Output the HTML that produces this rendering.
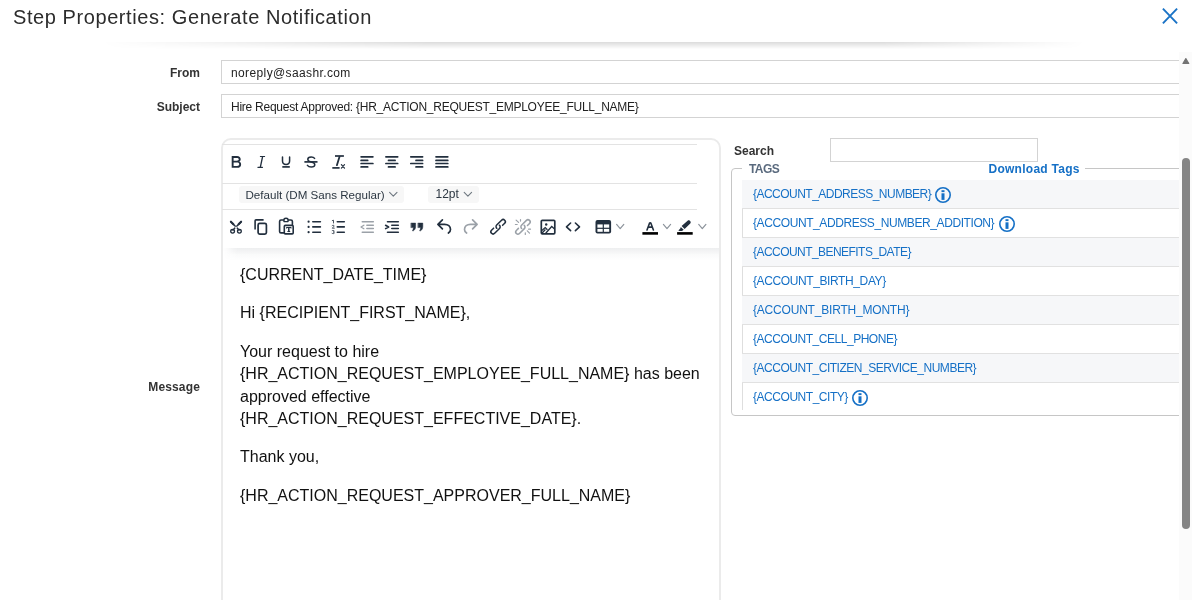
<!DOCTYPE html>
<html><head><meta charset="utf-8">
<style>
*{box-sizing:border-box;margin:0;padding:0}
html,body{width:1192px;height:600px;overflow:hidden;background:#fff;-webkit-font-smoothing:antialiased;font-family:"Liberation Sans",sans-serif;color:#333}
.abs{position:absolute}
#title{left:13px;top:5px;font-size:20px;line-height:24px;letter-spacing:0.58px;color:#2c2c2c;white-space:nowrap}
#close{left:1161px;top:7px;width:18px;height:18px}
#shadow{left:0;top:42px;width:1192px;height:7px;background:linear-gradient(to bottom,rgba(0,0,0,.14),rgba(0,0,0,0));
 -webkit-mask-image:linear-gradient(to right,transparent 8.5%,#000 36%,#000 74%,transparent 91%)}
.lbl{font-weight:bold;font-size:12px;line-height:14px;color:#333;text-align:right;width:100px;white-space:nowrap}
.inp{border:1px solid #d3d3d3;background:#fff;height:24px;font-size:12px;line-height:22px;padding-left:9px;padding-top:1px;color:#222;white-space:nowrap;overflow:hidden}
#editor{left:221px;top:138px;width:500px;height:480px;border:2px solid #ebebeb;border-radius:10px;background:#fff}
.sep{height:1px;background:#e3e3e3}
.ic{position:absolute}
#content{left:240px;font-size:16px;line-height:22.4px;color:#111;white-space:nowrap}
#scroll{left:1179px;top:52px;width:13px;height:548px;background:#fbfbfb}
#thumb{left:1182px;top:158px;width:8px;height:371px;background:#858585;border-radius:4px}
.tag{position:absolute;left:742px;width:437px;height:29px;border-bottom:1px solid #e1e1e1;font-size:12px;line-height:28px;color:#1570c6;padding-left:11px;white-space:nowrap}
.tag.odd{background:#f6f7f9}
#fs{left:731px;top:168px;width:500px;height:248px;border:1px solid #c6c6c6;border-radius:4px}
#legend{left:742px;top:163px;width:343px;height:12px;background:#fff;padding-left:7px;font-weight:bold;font-size:12px;line-height:13px;color:#5a6a7e;letter-spacing:-0.6px}
#dl{left:988.5px;top:161px;font-weight:bold;font-size:12px;line-height:16px;color:#1570c6;white-space:nowrap;letter-spacing:0.26px}
#tbl{left:742px;top:180px;width:1px;height:230px;background:#dedede}
.info{position:absolute;top:7px;width:16px;height:16px}
.tt{display:inline-block}
#fontdd{left:239px;top:186px;width:165px;height:17px;background:#f7f7f7;border-radius:3px;font-size:11.6px;line-height:17px;padding-left:6.5px;color:#2b3641;white-space:nowrap}
#sizedd{left:427.5px;top:186px;width:51px;height:17px;background:#f7f7f7;border-radius:3px;font-size:12px;line-height:17px;padding-left:8px;color:#2b3641;white-space:nowrap}
#tbshadow{left:223px;top:248px;width:496px;height:12px;background:linear-gradient(to bottom,rgba(34,47,62,.08),rgba(34,47,62,.02) 60%,rgba(34,47,62,0));-webkit-mask-image:linear-gradient(to right,transparent 0,#000 14px)}
</style></head><body><div id="root" style="position:absolute;left:0;top:0;width:1192px;height:600px;will-change:transform">
<div id="title" class="abs">Step Properties: Generate Notification</div>
<svg id="close" class="abs" viewBox="0 0 18 18"><path d="M1.9 1.6L16.1 16.4M16.1 1.6L1.9 16.4" stroke="#1a73c6" stroke-width="1.9" fill="none"/></svg>
<div id="shadow" class="abs"></div>

<div class="abs lbl" style="left:100px;top:66px">From</div>
<div class="abs inp" style="left:221px;top:60px;width:1000px;letter-spacing:0.38px">noreply@saashr.com</div>
<div class="abs lbl" style="left:100px;top:100px">Subject</div>
<div class="abs inp" style="left:221px;top:94px;width:1000px;letter-spacing:-0.25px">Hire Request Approved: {HR_ACTION_REQUEST_EMPLOYEE_FULL_NAME}</div>
<div class="abs lbl" style="left:100px;top:380px;letter-spacing:0.15px">Message</div>

<div id="editor" class="abs"></div>
<div class="abs sep" style="left:222px;top:144px;width:475px"></div>
<div class="abs sep" style="left:222px;top:183px;width:475px"></div>
<div class="abs sep" style="left:222px;top:209px;width:475px"></div>

<div class="abs" id="fontdd">Default (DM Sans Regular)</div>
<div class="abs" id="sizedd">12pt</div>
<div class="abs" id="tbshadow"></div>
<svg class="abs" style="left:0;top:0" width="1192" height="600" viewBox="0 0 1192 600">
<g fill="none" stroke="#222f3e" stroke-linecap="round" stroke-linejoin="round">
<!-- Bold -->
<path d="M231.7 156 H237 C239.4 156 240.7 157.3 240.7 159.2 C240.7 160.4 240.1 161.2 239.2 161.6 C240.4 162 241.1 163 241.1 164.4 C241.1 166.5 239.6 167.8 237.3 167.8 H231.7 Z M233.6 157.9 V160.8 H236.8 C238.1 160.8 238.8 160.2 238.8 159.35 C238.8 158.5 238.1 157.9 236.8 157.9 Z M233.6 162.6 V165.9 H237.1 C238.5 165.9 239.2 165.3 239.2 164.25 C239.2 163.2 238.5 162.6 237.1 162.6 Z" fill="#222f3e" fill-rule="evenodd" stroke="none"/>
<!-- Italic -->
<path d="M262.6 156.6 L260.3 167.3" stroke-width="1.35"/>
<path d="M260.4 156.5 H264.6 M257.9 167.3 H262.5" stroke-width="1.15"/>
<!-- Underline -->
<path d="M282.5 156.9 V161 C282.5 163.3 283.9 164.4 286.05 164.4 C288.2 164.4 289.6 163.3 289.6 161 V156.9" stroke-width="1.5"/>
<path d="M282.3 166.9 H289.8" stroke-width="1.7" stroke-linecap="butt"/>
<!-- Strike -->
<path d="M314.6 158.4 C313.9 157.3 312.8 156.9 311.2 156.9 C309.1 156.9 307.8 157.9 307.8 159.3 C307.8 160.9 309.1 161.5 311.2 162 C313.6 162.5 314.8 163.3 314.8 164.8 C314.8 166.3 313.4 167.1 311.2 167.1 C309.5 167.1 308.2 166.5 307.4 165.4" stroke-width="1.5"/>
<path d="M304.4 161.9 H317.5" stroke-width="1.7" stroke-linecap="butt"/>
<!-- Clear format -->
<path d="M335 156 H343.9" stroke-width="1.7" stroke-linecap="butt"/>
<path d="M339.5 156.8 L336.9 165.2" stroke-width="1.8"/>
<path d="M332.3 167.9 H339.6" stroke-width="1.7" stroke-linecap="butt"/>
<path d="M341.4 164.6 L344.5 168.1 M344.5 164.6 L341.4 168.1" stroke-width="1.2"/>
<!-- align left -->
<path d="M361.1 156.8 H372.9 M361.1 160.4 H367.7 M361.1 163.5 H372.9 M361.1 166.9 H367.7" stroke-width="1.7"/>
<!-- align center -->
<path d="M385.9 156.8 H397.7 M388.5 160.4 H395.1 M385.9 163.5 H397.7 M388.5 166.9 H395.1" stroke-width="1.7"/>
<!-- align right -->
<path d="M410.8 156.8 H422.6 M416 160.4 H422.6 M410.8 163.5 H422.6 M416 166.9 H422.6" stroke-width="1.7"/>
<!-- justify -->
<path d="M436 156.8 H447.8 M436 160.4 H447.8 M436 163.5 H447.8 M436 166.9 H447.8" stroke-width="1.7"/>

<!-- font dropdown chevrons -->
<path d="M389.6 192.4 L393.3 196.2 L397 192.4 M464.2 192.4 L467.9 196.2 L471.6 192.4" stroke="#6f7881" stroke-width="1.1"/>

<!-- Scissors -->
<path d="M231 221.9 L239.1 230.1 M241 221.9 L232.9 230.1" stroke-width="1.4"/>
<path d="M230.9 221.7 L233.4 224.3 M241.1 221.7 L238.6 224.3" stroke-width="2.1"/>
<circle cx="236" cy="227.4" r="0.9" fill="#fff" stroke="none"/>
<ellipse cx="232.6" cy="231.3" rx="1.9" ry="1.8" stroke-width="1.3"/>
<ellipse cx="239.4" cy="231.3" rx="1.9" ry="1.8" stroke-width="1.3"/>
<!-- Copy -->
<path d="M255.1 229.6 V220.8 C255.1 220.2 255.4 219.9 256 219.9 H263.6" stroke-width="1.6" stroke-linecap="butt"/>
<rect x="258.1" y="223.3" width="8.3" height="10.9" rx="1.6" stroke-width="1.7"/>
<!-- Paste -->
<path d="M283.6 232.9 H281 C280.1 232.9 279.6 232.4 279.6 231.5 V221.4 C279.6 220.5 280.1 220 281 220 H290.9 C291.8 220 292.4 220.5 292.4 221.4 V224.6" stroke-width="1.6"/>
<path d="M284 220.2 V219.8 C284 218.9 284.8 218.3 286 218.3 C287.2 218.3 288 218.9 288 219.8 V221.6 H284 Z" stroke-width="1.4" fill="#fff"/>
<rect x="284.3" y="225.4" width="8.9" height="8.5" rx="1" stroke-width="1.6" fill="#fff"/>
<path d="M286.6 228.4 V227.5 H291 V228.4" stroke-width="1.1" stroke-linecap="butt"/><path d="M288.8 227.5 V231.4" stroke-width="1.5" stroke-linecap="butt"/><path d="M287.4 231.5 H290.2" stroke-width="1.1" stroke-linecap="butt"/>
<!-- bullet list -->
<path d="M312.8 221.7 H320.4 M312.8 226.9 H320.4 M312.8 232.2 H320.4" stroke-width="1.6"/>
<circle cx="308.6" cy="221.7" r="1.1" fill="#222f3e" stroke="none"/>
<circle cx="308.6" cy="226.9" r="1.1" fill="#222f3e" stroke="none"/>
<circle cx="308.6" cy="232.2" r="1.1" fill="#222f3e" stroke="none"/>
<!-- numbered list -->
<path d="M337.3 221.7 H344.3 M337.3 226.9 H344.3 M337.3 232.2 H344.3" stroke-width="1.6"/>
<path d="M332.3 220.6 L333.5 220.2 V223 M332.1 225.6 C332.6 225.1 334.2 225.1 334.2 226 C334.2 226.8 332.3 227.5 332.3 228.2 H334.3 M332.2 230.6 C332.8 230.3 334.3 230.3 334.3 231.2 C334.3 231.7 333.6 231.9 333.2 232 C333.8 232.1 334.4 232.3 334.4 232.9 C334.4 233.8 332.8 233.8 332.1 233.4" stroke-width="0.8"/>
<!-- outdent -->
<g stroke="#9ba1a8">
<path d="M362.3 221.7 H373.3 M366.9 225.2 H373.3 M366.9 228.5 H373.3 M362.3 232.2 H373.3" stroke-width="1.6"/>
<path d="M363.9 225.2 L361 227 L363.9 228.7" stroke-width="1.3"/>
</g>
<!-- indent -->
<path d="M387.5 221.7 H398.3 M391.8 225.2 H398.3 M391.8 228.5 H398.3 M387.5 232.2 H398.3" stroke-width="1.6"/>
<path d="M385.6 225.3 L388.6 227 L385.6 228.6" stroke-width="1.6"/>
<!-- quote -->
<path d="M411.2 223.1 H415.6 V226.5 C415.6 228.5 414.8 230 413.4 230.8 H412.4 C413 230 413.3 229 413.4 227.6 H411.2 Z M418.2 223.1 H422.8 V226.5 C422.8 228.5 422 230 420.6 230.8 H419.6 C420.2 230 420.5 229 420.6 227.6 H418.2 Z" fill="#222f3e" stroke-width="0.5"/>
<!-- undo -->
<path d="M442.4 219.9 L437.9 224.3 L442.4 228.9 M438.3 224.3 H444.6 C448 224.3 450.5 226.5 450.5 229.4 C450.5 231 449.6 232.2 448.4 233" stroke-width="1.7"/>
<!-- redo -->
<path d="M472.6 219.9 L477.1 224.3 L472.6 228.9 M476.7 224.3 H470.4 C467 224.3 464.5 226.5 464.5 229.4 C464.5 231 465.4 232.2 466.6 233" stroke="#9ba1a8" stroke-width="1.7"/>
<!-- link -->
<defs><path id="lk" d="M4.2 2.2 H7.1 A2.2 2.2 0 0 0 7.1 -2.2 H0.2 A2.2 2.2 0 0 0 -2 0.2"/></defs>
<g transform="translate(498.1 226.75) rotate(-45)" stroke-width="1.5"><use href="#lk"/><use href="#lk" transform="rotate(180)"/></g>
<!-- unlink -->
<g stroke="#9ba1a8">
<g transform="translate(522.95 226.95) rotate(-45)" stroke-width="1.5"><use href="#lk"/><use href="#lk" transform="rotate(180)"/></g>
<path d="M516.1 220.1 L518.6 222.4 M520.5 219.6 V221.1 M515.4 224.5 H517.2 M528.6 229.2 H530.5 M527.3 230.8 L529.5 233.1 M525.3 232.8 V234.4" stroke-width="1.2"/>
</g>
<!-- image -->
<rect x="541.3" y="220.3" width="13.5" height="13.5" rx="1" stroke-width="1.7"/>
<circle cx="546.2" cy="224.5" r="1.2" fill="#222f3e" stroke="none"/>
<path d="M541.9 230.4 L545.2 227.6 L547.4 229.8 M545.7 233.3 L551.7 226.5 L554.6 229.1 M541.9 233.3 L545.4 229.5" stroke-width="1.3" stroke-linejoin="miter" stroke-linecap="butt"/>
<!-- code -->
<path d="M570.6 223 L566.5 226.9 L570.6 230.7 M575.4 223 L579.5 226.9 L575.4 230.7" stroke-width="1.6"/>
<!-- table -->
<rect x="595.5" y="220" width="15.6" height="13.6" rx="2" fill="#222f3e" stroke="none"/>
<rect x="597.4" y="224.4" width="5.3" height="3.3" fill="#fff" stroke="none"/>
<rect x="603.9" y="224.4" width="5.3" height="3.3" fill="#fff" stroke="none"/>
<rect x="597.4" y="228.9" width="5.3" height="2.9" fill="#fff" stroke="none"/>
<rect x="603.9" y="228.9" width="5.3" height="2.9" fill="#fff" stroke="none"/>
<!-- chevrons -->
<path d="M616.6 224.4 L620.2 228.6 L623.8 224.4 M663.4 224.4 L667 228.6 L670.6 224.4 M698.7 224.4 L702.3 228.6 L705.9 224.4" stroke="#8d949c" stroke-width="1.2"/>
<!-- text color -->
<path d="M647 230 L649.5 223.2 C649.8 222.6 650.6 222.6 650.9 223.2 L653.4 230 M648.2 227.1 H652.2" stroke-width="1.6"/>
<rect x="642.4" y="232.1" width="15.6" height="2.6" fill="#000" stroke="none"/>
<!-- highlight -->
<path d="M687.6 220.8 C688.3 220.2 689.2 220.2 689.8 220.8 L690.3 221.3 C690.9 221.9 690.9 222.8 690.3 223.4 L684.6 229 L681.6 226 Z" fill="#222f3e" stroke="none"/>
<path d="M680.8 226.9 L683.7 229.8 L682 231 L679.7 231 L678.3 230.6 L680.3 228.6 Z" fill="#222f3e" stroke="none"/>
<rect x="677.1" y="232.1" width="15.6" height="2.6" fill="#000" stroke="none"/>
</g>
</svg>

<div id="content" class="abs" style="top:264px">
<div style="margin-bottom:16px">{CURRENT_DATE_TIME}</div>
<div style="margin-bottom:16px">Hi {RECIPIENT_FIRST_NAME},</div>
<div style="margin-bottom:16px">Your request to hire<br>{HR_ACTION_REQUEST_EMPLOYEE_FULL_NAME} has been<br>approved effective<br>{HR_ACTION_REQUEST_EFFECTIVE_DATE}.</div>
<div style="margin-bottom:16px">Thank you,</div>
<div>{HR_ACTION_REQUEST_APPROVER_FULL_NAME}</div>
</div>

<div class="abs lbl" style="left:734px;top:144px;text-align:left">Search</div>
<div class="abs inp" style="left:830px;top:138px;width:208px"></div>

<div class="abs" id="fs"></div>
<div class="abs" id="legend">TAGS</div>
<div class="abs" id="dl">Download Tags</div>
<div class="abs" id="tbl"></div>
<div class="tag odd" style="top:180px;height:29px"><span class="tt" style="letter-spacing:-0.52px">{ACCOUNT_ADDRESS_NUMBER}</span><svg class="info" style="left:193px" viewBox="0 0 16 16"><circle cx="8" cy="8" r="7.2" fill="none" stroke="#1570c6" stroke-width="1.6"/><rect x="6.5" y="3.2" width="3" height="1.9" fill="#1570c6"/><rect x="6.5" y="6.3" width="3" height="6.6" fill="#1570c6"/></svg></div>
<div class="tag" style="top:209px;height:29px"><span class="tt" style="letter-spacing:-0.41px">{ACCOUNT_ADDRESS_NUMBER_ADDITION}</span><svg class="info" style="left:257px" viewBox="0 0 16 16"><circle cx="8" cy="8" r="7.2" fill="none" stroke="#1570c6" stroke-width="1.6"/><rect x="6.5" y="3.2" width="3" height="1.9" fill="#1570c6"/><rect x="6.5" y="6.3" width="3" height="6.6" fill="#1570c6"/></svg></div>
<div class="tag odd" style="top:238px;height:29px"><span class="tt" style="letter-spacing:-0.55px">{ACCOUNT_BENEFITS_DATE}</span></div>
<div class="tag" style="top:267px;height:29px"><span class="tt" style="letter-spacing:-0.39px">{ACCOUNT_BIRTH_DAY}</span></div>
<div class="tag odd" style="top:296px;height:29px"><span class="tt" style="letter-spacing:-0.2px">{ACCOUNT_BIRTH_MONTH}</span></div>
<div class="tag" style="top:325px;height:29px"><span class="tt" style="letter-spacing:-0.47px">{ACCOUNT_CELL_PHONE}</span></div>
<div class="tag odd" style="top:354px;height:29px"><span class="tt" style="letter-spacing:-0.48px">{ACCOUNT_CITIZEN_SERVICE_NUMBER}</span></div>
<div class="tag" style="top:383px;height:27px;border-bottom:none"><span class="tt" style="letter-spacing:-0.46px">{ACCOUNT_CITY}</span><svg class="info" style="left:110px" viewBox="0 0 16 16"><circle cx="8" cy="8" r="7.2" fill="none" stroke="#1570c6" stroke-width="1.6"/><rect x="6.5" y="3.2" width="3" height="1.9" fill="#1570c6"/><rect x="6.5" y="6.3" width="3" height="6.6" fill="#1570c6"/></svg></div>
<div id="scroll" class="abs"></div>
<div id="thumb" class="abs"></div>
<svg class="abs" style="left:1179px;top:52px" width="13" height="16" viewBox="0 0 13 16"><path d="M3.9 11.5 L6.85 6.5 L9.8 11.5 Z" fill="#737373" stroke="#737373" stroke-width="1.1" stroke-linejoin="round"/></svg>
</div></body></html>
